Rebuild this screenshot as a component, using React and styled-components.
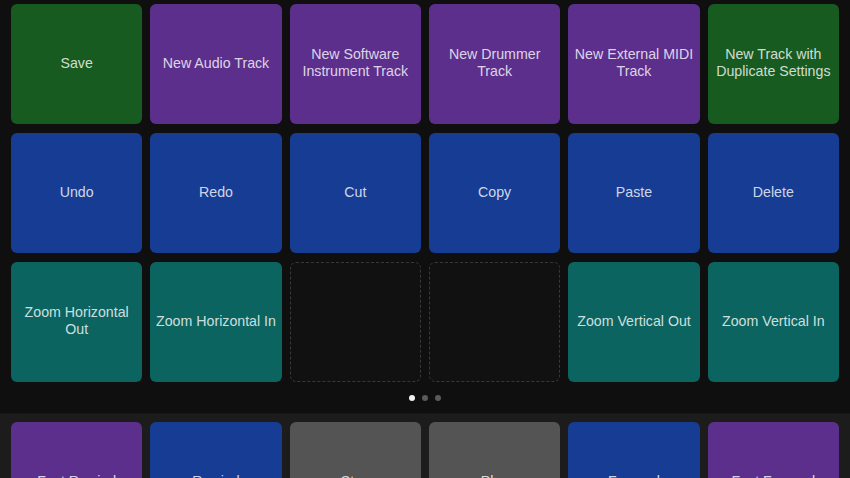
import React from "react";
import styled, { createGlobalStyle } from "styled-components";

const Global = createGlobalStyle`
  html, body { margin: 0; padding: 0; background: #0f0f0f; overflow: hidden; }
  body { font-family: "Liberation Sans", Arial, sans-serif; }
`;

const COLORS = {
  green: "#185b20",
  purple: "#5c2f8d",
  blue: "#173c93",
  teal: "#0b645f",
  gray: "#545454",
};

const Page = styled.div`
  width: 850px;
  height: 478px;
  display: flex;
  flex-direction: column;
  background: #0f0f0f;
  overflow: hidden;
`;

const Grid = styled.div`
  display: grid;
  grid-template-columns: repeat(6, 1fr);
  grid-auto-rows: 120px;
  column-gap: 8px;
  row-gap: 9px;
  padding: ${(p) => p.$pad};
`;

const Tile = styled.div`
  display: flex;
  align-items: center;
  justify-content: center;
  text-align: center;
  border-radius: 6px;
  background: ${(p) => COLORS[p.$color]};
  color: rgba(255, 255, 255, 0.8);
  font-size: 14.2px;
  line-height: 17px;
  padding: 0 5px 2px 5px;
  box-sizing: border-box;
`;

const EmptySlot = styled.div`
  border: 1px dashed #383838;
  border-radius: 6px;
  background: #111111;
`;

const Dots = styled.div`
  display: flex;
  justify-content: center;
  gap: 7px;
  padding: 13px 0 12px 0;
`;

const Dot = styled.span`
  width: 6px;
  height: 6px;
  border-radius: 50%;
  background: ${(p) => (p.$active ? "#f2f2f2" : "#5a5a5a")};
`;

const Transport = styled.div`
  flex: 1;
  background: #1c1c1c;
  border-top: 1px solid #161616;
`;

const top = [
  ["green", "Save"],
  ["purple", "New Audio Track"],
  ["purple", "New Software Instrument Track"],
  ["purple", "New Drummer Track"],
  ["purple", "New External MIDI Track"],
  ["green", "New Track with Duplicate Settings"],
  ["blue", "Undo"],
  ["blue", "Redo"],
  ["blue", "Cut"],
  ["blue", "Copy"],
  ["blue", "Paste"],
  ["blue", "Delete"],
  ["teal", "Zoom Horizontal Out"],
  ["teal", "Zoom Horizontal In"],
  null,
  null,
  ["teal", "Zoom Vertical Out"],
  ["teal", "Zoom Vertical In"],
];

const transport = [
  ["purple", "Fast Rewind"],
  ["blue", "Rewind"],
  ["gray", "Stop"],
  ["gray", "Play"],
  ["blue", "Forward"],
  ["purple", "Fast Forward"],
];

const wrapLabel = (t) => {
  const map = {
    "New Software Instrument Track": ["New Software", "Instrument Track"],
    "New Drummer Track": ["New Drummer", "Track"],
    "New External MIDI Track": ["New External MIDI", "Track"],
    "New Track with Duplicate Settings": ["New Track with", "Duplicate Settings"],
    "Zoom Horizontal Out": ["Zoom Horizontal", "Out"],
  };
  const lines = map[t];
  if (!lines) return t;
  return (
    <>
      {lines[0]}
      <br />
      {lines[1]}
    </>
  );
};

export default function App() {
  return (
    <Page>
      <Global />
      <Grid $pad="4px 11px 0 11px">
        {top.map((item, i) =>
          item ? (
            <Tile key={i} $color={item[0]}>
              <span>{wrapLabel(item[1])}</span>
            </Tile>
          ) : (
            <EmptySlot key={i} />
          )
        )}
      </Grid>
      <Dots>
        <Dot $active />
        <Dot />
        <Dot />
      </Dots>
      <Transport>
        <Grid $pad="8px 11px 0 11px">
          {transport.map(([c, t]) => (
            <Tile key={t} $color={c}>
              <span>{t}</span>
            </Tile>
          ))}
        </Grid>
      </Transport>
    </Page>
  );
}
